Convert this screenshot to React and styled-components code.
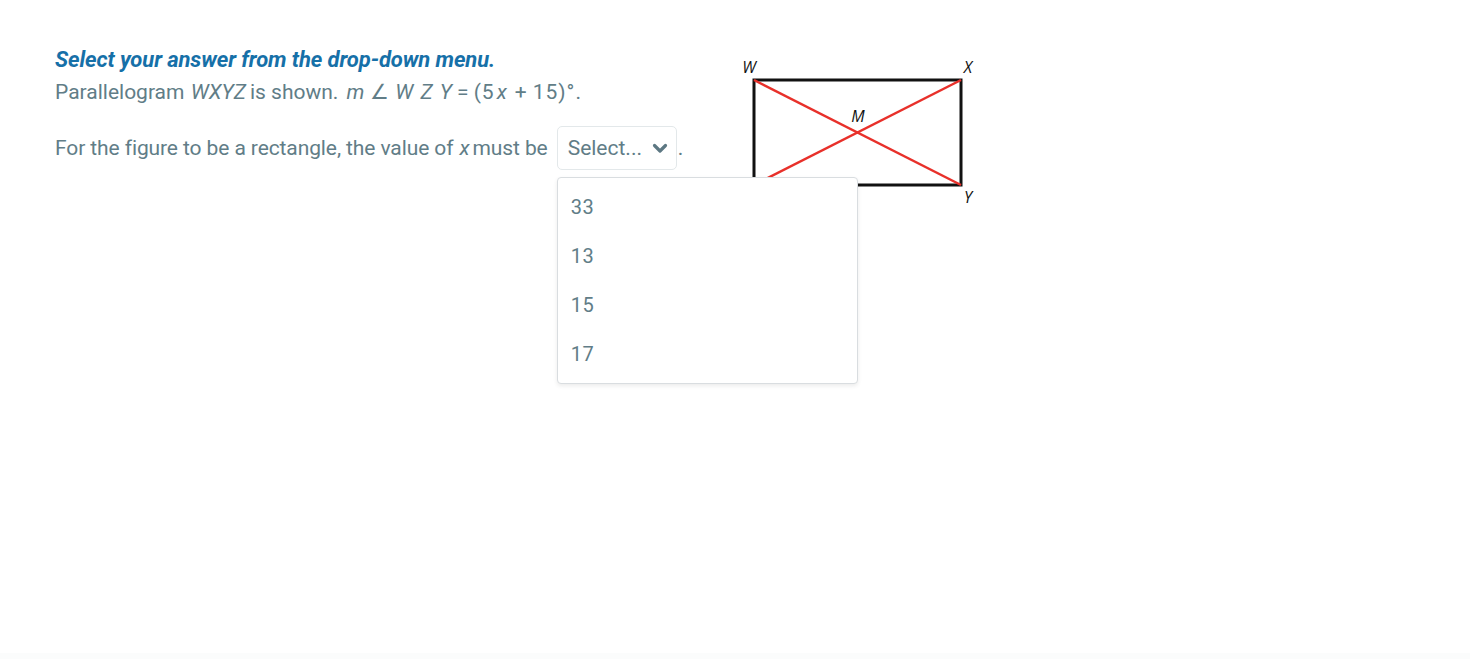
import React from 'react';
import styled, { createGlobalStyle } from 'styled-components';

const GlobalStyle = createGlobalStyle`
    html, body {
        margin: 0;
        padding: 0;
        background: #ffffff;
    }
    body {
        font-family: Roboto, "Open Sans", sans-serif;
    }
`;

const Page = styled.div`
    width: 1470px;
    height: 659px;
    box-sizing: border-box;
    padding: 44px 0 0 55px;
    display: flex;
    flex-direction: column;
    position: relative;
`;

const Row = styled.div`
    display: flex;
    align-items: flex-start;
`;

const TextColumn = styled.div`
    width: 680px;
    display: flex;
    flex-direction: column;
`;

const Heading = styled.div`
    font-family: Roboto, sans-serif;
    font-weight: 700;
    font-style: italic;
    font-size: 22px;
    line-height: 31px;
    color: #1670a8;
    letter-spacing: -0.1px;
`;

const Line = styled.div`
    font-size: 21px;
    line-height: 30px;
    color: #617d87;
    display: flex;
    align-items: center;
    white-space: pre;
    letter-spacing: ${p => p.$track || 0}px;
    margin-top: ${p => p.$gap || 0}px;
`;

const Var = styled.i`
    font-style: italic;
    margin: 0 ${p => p.$right || 0}px 0 ${p => p.$left || 0}px;
`;

const Math = styled.span`
    margin-left: 8px;
    letter-spacing: 1px;
`;

const Op = styled.span`
    margin: 0 ${p => p.$space || 4}px;
`;

const SelectWrap = styled.div`
    position: relative;
    margin: 0 1px 0 9px;
    letter-spacing: 0;
`;

const SelectBox = styled.div`
    width: 120px;
    height: 44px;
    box-sizing: border-box;
    border: 1px solid #e3e8ea;
    border-radius: 5px;
    display: flex;
    align-items: center;
    justify-content: space-between;
    padding: 0 8px 0 10px;
    color: #617d87;
`;

const Menu = styled.div`
    position: absolute;
    left: 0;
    top: 51px;
    width: 301px;
    box-sizing: border-box;
    background: #ffffff;
    border: 1px solid #d9dde0;
    border-radius: 4px;
    box-shadow: 0 2px 4px rgba(0, 0, 0, 0.08);
    padding: 4px 0 5px;
    z-index: 5;
`;

const Option = styled.div`
    height: 49px;
    display: flex;
    align-items: center;
    padding-left: 13px;
    font-size: 20px;
    color: #617d87;
    letter-spacing: 0.5px;
`;

const Figure = styled.svg`
    margin-top: 6px;
    display: block;
`;

const Footer = styled.div`
    position: absolute;
    left: 0;
    right: 0;
    bottom: 0;
    height: 6px;
    background: #fbfcfc;
`;

const Chevron = () => (
    <svg width="16" height="12" viewBox="0 0 16 12">
        <path d="M2.5 3.5 L8 9 L13.5 3.5" fill="none" stroke="#5d7883" strokeWidth="3.2" strokeLinecap="round" strokeLinejoin="round" />
    </svg>
);

const labelStyle = {
    fontFamily: '"Open Sans", sans-serif',
    fontStyle: 'italic',
    fontSize: 16,
    fill: '#111',
};

export default function App() {
    return (
        <>
            <GlobalStyle />
            <Page>
                <Row>
                    <TextColumn>
                        <Heading>Select your answer from the drop-down menu.</Heading>
                        <Line $gap={2}>
                            Parallelogram <Var $left={1} $right={4}>WXYZ</Var>is shown.
                            <Math>
                                <Var>m</Var><Op $space={5}>∠</Op><Var>W Z Y</Var><Op $space={4}>=</Op>(5<Var $left={2} $right={2}>x</Var><Op $space={5}>+</Op>15)°.
                            </Math>
                        </Line>
                        <Line $gap={19} $track={-0.1}>
                            For the figure to be a rectangle, the value of <Var $left={1} $right={3}>x</Var>must be
                            <SelectWrap>
                                <SelectBox>
                                    <span>Select...</span>
                                    <Chevron />
                                </SelectBox>
                                <Menu>
                                    <Option>33</Option>
                                    <Option>13</Option>
                                    <Option>15</Option>
                                    <Option>17</Option>
                                </Menu>
                            </SelectWrap>
                            .
                        </Line>
                    </TextColumn>
                    <Figure width="260" height="160" viewBox="0 0 260 160">
                        <rect x="19" y="30" width="207" height="105" fill="none" stroke="#111" strokeWidth="3" />
                        <line x1="19" y1="30" x2="226" y2="135" stroke="#e8302a" strokeWidth="2.5" />
                        <line x1="226" y1="30" x2="19" y2="135" stroke="#e8302a" strokeWidth="2.5" />
                        <text x="14" y="23" textAnchor="middle" style={labelStyle}>W</text>
                        <text x="233" y="23" textAnchor="middle" style={labelStyle}>X</text>
                        <text x="123" y="72" textAnchor="middle" style={labelStyle}>M</text>
                        <text x="233" y="153" textAnchor="middle" style={labelStyle}>Y</text>
                    </Figure>
                </Row>
                <Footer />
            </Page>
        </>
    );
}
